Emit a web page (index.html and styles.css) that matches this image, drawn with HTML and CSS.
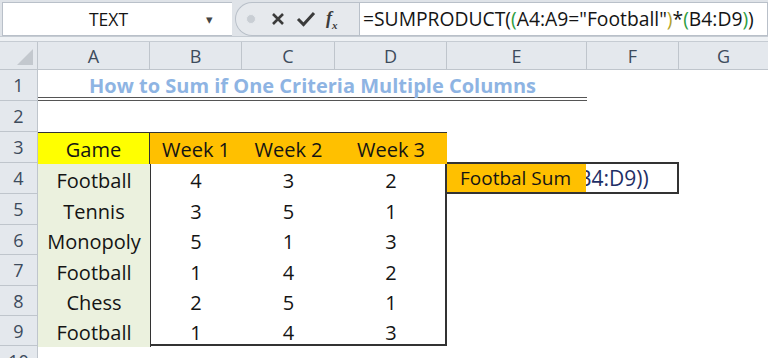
FILE: index.html
```html
<!DOCTYPE html>
<html lang="en">
<head>
  <meta charset="UTF-8" />
  <title>How to Sum if One Criteria Multiple Columns</title>
  <link rel="stylesheet" href="styles.css">
</head>
<body>
  <div class="formula-bar">
    <div class="name-box">
      <span class="name">TEXT</span>
      <span class="drop">&#9662;</span>
    </div>
    <div class="fx-buttons">
      <span class="knob"></span>
      <svg class="ico" width="16" height="16" viewBox="0 0 16 16"><path d="M3 3 L13 13 M13 3 L3 13" stroke="#3b3b3b" stroke-width="2.6" fill="none"/></svg>
      <svg class="ico" width="20" height="16" viewBox="0 0 20 16"><path d="M2 8 L7.5 13.5 L18 2" stroke="#3b3b3b" stroke-width="3" fill="none"/></svg>
      <span class="fx">f<sub>x</sub></span>
    </div>
    <div class="formula">=SUMPRODUCT(<span class="g">(</span>A4:A9="Football"<span class="y">)</span>*<span class="g">(</span>B4:D9<span class="g">)</span>)</div>
  </div>
  <div class="band"></div>

  <div class="sheet">
    <div class="corner"><span class="tri"></span></div>
    <div class="col-head">A</div>
    <div class="col-head">B</div>
    <div class="col-head">C</div>
    <div class="col-head">D</div>
    <div class="col-head">E</div>
    <div class="col-head">F</div>
    <div class="col-head last">G</div>

    <div class="row-head">1</div>
    <div class="title">How to Sum if One Criteria Multiple Columns</div>
    <div class="blank"></div>

    <div class="row-head">2</div>
    <div class="blank wide"></div>

    <div class="row-head">3</div>
    <div class="row-head">4</div>
    <div class="row-head">5</div>
    <div class="row-head">6</div>
    <div class="row-head">7</div>
    <div class="row-head">8</div>
    <div class="row-head">9</div>
    <div class="row-head">10</div>

    <div class="data">
      <div class="cell game-head">Game</div>
      <div class="week-head">
        <div class="cell">Week 1</div>
        <div class="cell">Week 2</div>
        <div class="cell">Week 3</div>
      </div>
      <div class="games">
        <div class="cell">Football</div>
        <div class="cell">Tennis</div>
        <div class="cell">Monopoly</div>
        <div class="cell">Football</div>
        <div class="cell">Chess</div>
        <div class="cell">Football</div>
      </div>
      <div class="nums">
        <div class="cell">4</div><div class="cell">3</div><div class="cell">2</div>
        <div class="cell">3</div><div class="cell">5</div><div class="cell">1</div>
        <div class="cell">5</div><div class="cell">1</div><div class="cell">3</div>
        <div class="cell">1</div><div class="cell">4</div><div class="cell">2</div>
        <div class="cell">2</div><div class="cell">5</div><div class="cell">1</div>
        <div class="cell">1</div><div class="cell">4</div><div class="cell">3</div>
      </div>
    </div>

    <div class="sum-box">
      <div class="sum-label">Footbal Sum</div>
      <div class="sum-edit"><span class="ref">B4:D9))</span></div>
    </div>
  </div>
</body>
</html>
```
FILE: styles.css
```css
* {
  box-sizing: border-box;
}

body {
  margin: 0;
  width: 768px;
  height: 358px;
  overflow: hidden;
  background: #fff;
  font-family: 'Open Sans', 'Liberation Sans', sans-serif;
  color: #141414;
}

/* formula bar */
.formula-bar {
  height: 36px;
  padding-top: 2px;
  background: #dfe3e8;
  display: flex;
}

.name-box {
  width: 230px;
  margin-left: 2px;
  background: #fff;
  border: 1px solid #b9c0c9;
  border-right: none;
  display: flex;
  align-items: center;
  font-size: 17.5px;
}

.name {
  flex: 1;
  text-align: center;
  padding-left: 8px;
}

.drop {
  width: 26px;
  font-size: 13px;
  color: #444;
}

.fx-buttons {
  width: 124px;
  background: #e6e9ed;
  border-top: 1px solid #b9c0c9;
  border-bottom: 1px solid #b9c0c9;
  border-left: 1px solid #b9c0c9;
  border-radius: 17px 0 0 17px;
  margin-left: 3px;
  display: flex;
  align-items: center;
  gap: 10px;
  padding-left: 10px;
}

.knob {
  width: 10px;
  height: 10px;
  border-radius: 50%;
  background: #c9ced4;
  border: 1px solid #e6e9ed;
  margin-right: 4px;
}

.fx {
  font-family: 'Liberation Serif', serif;
  font-style: italic;
  font-weight: bold;
  font-size: 18px;
  color: #3b3b3b;
}

.fx sub {
  font-size: 11px;
}

.formula {
  flex: 1;
  background: #fff;
  border: 1px solid #b9c0c9;
  font-size: 19.3px;
  padding-left: 3px;
  line-height: 32px;
  white-space: nowrap;
  overflow: hidden;
}

.g {
  color: #2e9e3f;
}

.y {
  color: #b3a22a;
}

.band {
  height: 6px;
  background: #eef1f4;
  border-top: 1px solid #c6ccd3;
  border-bottom: 1px solid #c6ccd3;
}

/* sheet grid */
.sheet {
  display: grid;
  grid-template-columns: 38px 112px 92px 93px 112px 140px 92px 1fr;
  grid-template-rows: 28px 31px 31px 31px 31px 31px 30px 31px 30px 30px 30px;
  font-size: 18px;
}

.corner {
  background: #e4e8ed;
  border-right: 1px solid #bfc5cc;
  border-bottom: 1px solid #bfc5cc;
  position: relative;
}

.tri {
  position: absolute;
  right: 4px;
  bottom: 4px;
  width: 0;
  height: 0;
  border-left: 16px solid transparent;
  border-bottom: 16px solid #c3c8ce;
}

.col-head {
  background: #e4e8ed;
  border-right: 1px solid #bfc5cc;
  border-bottom: 1px solid #bfc5cc;
  color: #3d4b5c;
  display: flex;
  align-items: center;
  justify-content: center;
}

.col-head.last {
  border-right: none;
}

.row-head {
  grid-column: 1;
  background: #e4e8ed;
  border-right: 1px solid #bfc5cc;
  border-bottom: 1px solid #bfc5cc;
  color: #3d4b5c;
  display: flex;
  align-items: center;
  justify-content: center;
}

.title {
  grid-column: 2 / 7;
  border-bottom: 4px double #555;
  color: #8eb4e3;
  font-weight: bold;
  font-size: 20px;
  display: flex;
  align-items: center;
  justify-content: center;
  padding-top: 4px;
  white-space: nowrap;
}

.blank.wide {
  grid-column: 2 / 9;
}

.data {
  grid-column: 2 / 6;
  grid-row: 4 / 11;
  display: grid;
  grid-template-columns: 112px 297px;
  grid-template-rows: 31px 1fr;
  border-top: 1px solid #333;
  border-right: 2px solid #333;
  border-bottom: 2px solid #333;
  font-size: 20px;
}

.cell {
  display: flex;
  align-items: center;
  justify-content: center;
  padding-top: 1px;
}

.game-head {
  background: #ffff00;
  border-right: 1px solid #333;
}

.week-head {
  display: grid;
  grid-template-columns: 92px 93px 112px;
  background: #ffc000;
}

.games {
  display: grid;
  grid-template-rows: 31px 31px 30px 31px 30px 30px;
  background: #ebf1de;
  border-right: 1px solid #333;
  margin-right: -1px;
}

.nums {
  display: grid;
  grid-template-columns: 92px 93px 112px;
  grid-template-rows: 31px 31px 30px 31px 30px 30px;
}

.sum-box {
  grid-column: 6 / 8;
  grid-row: 5;
  display: grid;
  grid-template-columns: 139px 1fr;
  border: 2px solid #333;
  border-left: none;
  margin-top: -1px;
  font-size: 19px;
}

.sum-label {
  background: #ffc000;
  display: flex;
  align-items: center;
  padding-left: 13px;
}

.sum-edit {
  display: flex;
  align-items: center;
  overflow: hidden;
  white-space: nowrap;
  font-size: 21px;
}

.ref {
  margin-left: -8px;
  color: #1f2f66;
}
```
